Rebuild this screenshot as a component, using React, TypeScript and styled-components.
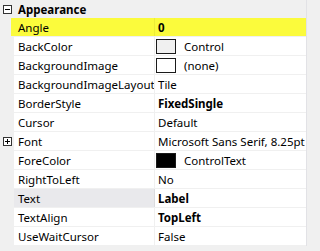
import styled, { createGlobalStyle } from "styled-components";

const GlobalStyle = createGlobalStyle`
  html, body {
    margin: 0;
    padding: 0;
    background: #f0f0f0;
  }
  body {
    font-family: "Noto Sans", "Open Sans", sans-serif;
    font-size: 11.5px;
    color: #000;
  }
`;

const Frame = styled.div`
  width: 311px;
  height: 251px;
  overflow: hidden;
  background: #f0f0f0;
`;

const Grid = styled.div`
  width: 306px;
  display: flex;
  flex-direction: column;
  background: #fff;
  border-right: 1px solid #e2e2e6;
`;

const CategoryRow = styled.div`
  display: flex;
  align-items: center;
  height: 18px;
  background: #f0f0f0;
  font-weight: bold;
  padding-left: 3px;
  gap: 6px;
`;

const PropertyRow = styled.div<{ $highlight?: boolean }>`
  display: grid;
  grid-template-columns: 14px 141px 1fr;
  height: 19px;
  box-sizing: border-box;
  border-bottom: 1px solid #f0f0f0;
  background: ${({ $highlight }) => ($highlight ? "#fbfb3c" : "#fff")};
`;

const Gutter = styled.div<{ $highlight?: boolean }>`
  display: flex;
  align-items: center;
  padding-left: 3px;
  background: ${({ $highlight }) =>
    $highlight
      ? "linear-gradient(to right, #f0f0f0 11px, #fbfb3c 11px)"
      : "#f0f0f0"};
`;

const NameCell = styled.div<{ $selected?: boolean }>`
  display: flex;
  align-items: center;
  padding-left: 4px;
  border-right: 1px solid rgba(0, 0, 0, 0.06);
  background: ${({ $selected }) => ($selected ? "#e9e9ec" : "transparent")};
  white-space: nowrap;
  overflow: hidden;
`;

const ValueCell = styled.div<{ $bold?: boolean }>`
  display: flex;
  align-items: center;
  gap: 8px;
  padding-left: 3px;
  font-weight: ${({ $bold }) => ($bold ? "bold" : "normal")};
  white-space: nowrap;
  overflow: hidden;
`;

const Swatch = styled.span<{ $color: string }>`
  width: 20px;
  height: 15px;
  box-sizing: border-box;
  margin-left: -2px;
  border: 1px solid #1a1a1a;
  background: ${({ $color }) => $color};
  flex-shrink: 0;
`;

const Expander = ({ open }: { open: boolean }) => (
  <svg width="9" height="9" viewBox="0 0 9 9">
    <rect x="0.5" y="0.5" width="8" height="8" fill="#fff" stroke="#333" />
    <line x1="2" y1="4.5" x2="7" y2="4.5" stroke="#000" />
    {!open && <line x1="4.5" y1="2" x2="4.5" y2="7" stroke="#000" />}
  </svg>
);

type Prop = {
  name: string;
  value: string;
  bold?: boolean;
  swatch?: string;
  expandable?: boolean;
  highlight?: boolean;
  selected?: boolean;
};

const properties: Prop[] = [
  { name: "Angle", value: "0", bold: true, highlight: true },
  { name: "BackColor", value: "Control", swatch: "#f0f0f0" },
  { name: "BackgroundImage", value: "(none)", swatch: "#fff" },
  { name: "BackgroundImageLayout", value: "Tile" },
  { name: "BorderStyle", value: "FixedSingle", bold: true },
  { name: "Cursor", value: "Default" },
  { name: "Font", value: "Microsoft Sans Serif, 8.25pt", expandable: true },
  { name: "ForeColor", value: "ControlText", swatch: "#000" },
  { name: "RightToLeft", value: "No" },
  { name: "Text", value: "Label", bold: true, selected: true },
  { name: "TextAlign", value: "TopLeft", bold: true },
  { name: "UseWaitCursor", value: "False" },
];

export default function App() {
  return (
    <Frame>
      <GlobalStyle />
      <Grid>
        <CategoryRow>
          <Expander open />
          <span>Appearance</span>
        </CategoryRow>
        {properties.map((p) => (
          <PropertyRow key={p.name} $highlight={p.highlight}>
            <Gutter $highlight={p.highlight}>
              {p.expandable && <Expander open={false} />}
            </Gutter>
            <NameCell $selected={p.selected}>{p.name}</NameCell>
            <ValueCell $bold={p.bold}>
              {p.swatch && <Swatch $color={p.swatch} />}
              <span>{p.value}</span>
            </ValueCell>
          </PropertyRow>
        ))}
      </Grid>
    </Frame>
  );
}
